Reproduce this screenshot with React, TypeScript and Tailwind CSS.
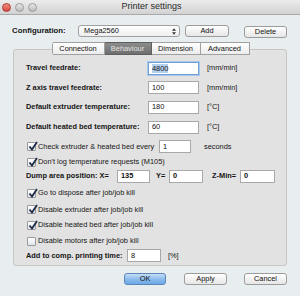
import React from "react";

const Check = ({ checked }: { checked: boolean }) => (
    <div className="relative h-[9px] w-[9px] shrink-0 rounded-[1px] border border-[#9a9a9a] bg-gradient-to-b from-[#ffffff] to-[#dfe6ee]">
        {checked && (
            <svg viewBox="0 0 10 10" className="absolute left-[0px] top-[-2px] h-[10px] w-[10px]">
                <path d="M1.5 5.5 L4 8.5 L9 1" fill="none" stroke="#1f2a44" strokeWidth="1.8" />
            </svg>
        )}
    </div>
);

const Field = ({ value, w, focused }: { value: string; w: string; focused?: boolean }) => (
    <div
        className={`flex h-[13px] items-center bg-white pl-[3px] text-[7.4px] text-[#111] ${w} ${
            focused ? "border border-[#6e9fd6] shadow-[0_0_0_1px_#a9c8ea]" : "border border-[#a8a8a8]"
        }`}
    >
        <span className={focused ? "bg-[#b3d0f0] leading-[9px]" : ""}>{value}</span>
    </div>
);

const Button = ({ label, primary, w }: { label: string; primary?: boolean; w: string }) => (
    <div
        className={`flex h-[12px] items-center justify-center rounded-[3px] border text-[7.4px] text-[#111] ${w} ${
            primary
                ? "border-[#5a86b8] bg-gradient-to-b from-[#c6def6] via-[#8ebceb] to-[#6aa8e6]"
                : "border-[#9c9c9c] bg-gradient-to-b from-[#ffffff] to-[#e6e6e6]"
        }`}
    >
        {label}
    </div>
);

const Tab = ({ label, active, w }: { label: string; active?: boolean; w: string }) => (
    <div
        className={`flex h-[13px] items-center justify-center border-y border-r text-[7.4px] ${w} ${
            active
                ? "border-[#5e5e5e] bg-gradient-to-b from-[#8c8c8c] to-[#6f6f6f] text-[#e4e4e4]"
                : "border-[#a0a0a0] bg-gradient-to-b from-[#ffffff] to-[#ececec] text-[#111]"
        }`}
    >
        {label}
    </div>
);

const CheckRow = ({ label, checked, h }: { label: string; checked: boolean; h: string }) => (
    <div className={`flex items-center pl-[13px] ${h}`}>
        <Check checked={checked} />
        <span className="ml-[2px]">{label}</span>
    </div>
);

const FieldRow = ({ label, value, unit, h, focused }: { label: string; value: string; unit: string; h: string; focused?: boolean }) => (
    <div className={`flex items-center pl-[12px] ${h}`}>
        <span className="w-[122px] font-bold">{label}</span>
        <Field value={value} w="w-[51px]" focused={focused} />
        <span className="ml-[8px]">{unit}</span>
    </div>
);

export default function App() {
    return (
        <div className="h-[296px] w-[300px] overflow-hidden bg-[#e8eef0] font-['Liberation_Sans',Arial,sans-serif] text-[7.4px] text-[#151515]">
            {/* title bar */}
            <div className="flex h-[15px] items-center border-b border-[#a9a9a9] bg-gradient-to-b from-[#ececec] to-[#d2d2d2] pl-[2px]">
                <div className="flex gap-[4px]">
                    <div className="h-[9px] w-[9px] rounded-full border border-[#b03a36] bg-gradient-to-b from-[#f08c80] to-[#d9463e]" />
                    <div className="h-[9px] w-[9px] rounded-full border border-[#9a9a9a] bg-gradient-to-b from-[#e8e8e8] to-[#bcbcbc]" />
                    <div className="h-[9px] w-[9px] rounded-full border border-[#9a9a9a] bg-gradient-to-b from-[#e8e8e8] to-[#bcbcbc]" />
                </div>
                <div className="flex-1 pr-[34px] text-center text-[9px] text-[#2a2a2a]">Printer settings</div>
            </div>

            {/* configuration row */}
            <div className="mt-[10px] flex h-[12px] items-center pl-[12px]">
                <span className="w-[66px] text-[7.8px] font-bold">Configuration:</span>
                <div className="flex h-[12px] w-[102px] items-center justify-between rounded-[3px] border border-[#a0a0a0] bg-gradient-to-b from-white to-[#eeeeee] pl-[5px] pr-[3px]">
                    <span>Mega2560</span>
                    <svg viewBox="0 0 6 10" className="h-[7px] w-[4px]">
                        <path d="M0 4 L3 0 L6 4 Z M0 6 L3 10 L6 6 Z" fill="#333" />
                    </svg>
                </div>
                <div className="ml-[5px]">
                    <Button label="Add" w="w-[44px]" />
                </div>
                <div className="ml-[15px] mt-[2px]">
                    <Button label="Delete" w="w-[43px]" />
                </div>
            </div>

            {/* tabs */}
            <div className="relative z-10 mt-[5px] flex justify-center pl-[1px]">
                <div className="flex rounded-[3px] border-l border-[#a0a0a0]">
                    <Tab label="Connection" w="w-[52px]" />
                    <Tab label="Behaviour" active w="w-[47px]" />
                    <Tab label="Dimension" w="w-[49px]" />
                    <Tab label="Advanced" w="w-[49px]" />
                </div>
            </div>

            {/* group box */}
            <div className="mx-[13px] -mt-[6px] h-[217px] rounded-[3px] border border-[#c6c6c6] bg-[#e2e2e2] pt-[8px]">
                <FieldRow label="Travel feedrate:" value="4800" unit="[mm/min]" h="h-[20px]" focused />
                <FieldRow label="Z axis travel feedrate:" value="100" unit="[mm/min]" h="h-[19px]" />
                <FieldRow label="Default extruder temperature:" value="180" unit="[°C]" h="h-[20px]" />
                <FieldRow label="Default heated bed temperature:" value="60" unit="[°C]" h="h-[20px]" />

                <div className="flex h-[19px] items-center pl-[13px]">
                    <Check checked />
                    <span className="ml-[2px] w-[121px]">Check extruder &amp; heated bed every</span>
                    <Field value="1" w="w-[32px]" />
                    <span className="ml-[13px]">seconds</span>
                </div>
                <CheckRow label="Don't log temperature requests (M105)" checked h="h-[12px]" />

                <div className="flex h-[16px] items-center pl-[12px] font-bold">
                    <span className="w-[91px]">Dump area position: X=</span>
                    <Field value="135" w="w-[33px]" />
                    <span className="ml-[6px] w-[13px]">Y=</span>
                    <Field value="0" w="w-[34px]" />
                    <span className="ml-[9px] w-[28px]">Z-Min=</span>
                    <Field value="0" w="w-[35px]" />
                </div>

                <CheckRow label="Go to dispose after job/job kill" checked h="h-[18px]" />
                <CheckRow label="Disable extruder after job/job kill" checked h="h-[15px]" />
                <CheckRow label="Disable heated bed after job/job kill" checked h="h-[16px]" />
                <CheckRow label="Disable motors after job/job kill" checked={false} h="h-[16px]" />

                <div className="flex h-[13px] items-center pl-[12px]">
                    <span className="w-[101px] font-bold">Add to comp. printing time:</span>
                    <Field value="8" w="w-[34px]" />
                    <span className="ml-[7px]">[%]</span>
                </div>
            </div>

            {/* bottom buttons */}
            <div className="mt-[7px] flex items-center pl-[124px]">
                <Button label="OK" primary w="w-[42px]" />
                <div className="ml-[18px]">
                    <Button label="Apply" w="w-[43px]" />
                </div>
                <div className="ml-[17px]">
                    <Button label="Cancel" w="w-[43px]" />
                </div>
            </div>
        </div>
    );
}
